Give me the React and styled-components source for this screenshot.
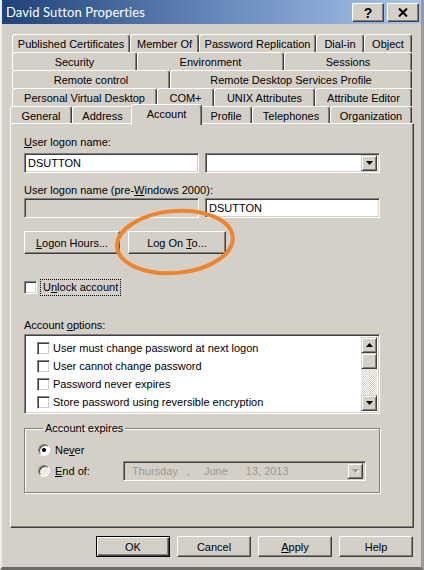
import React from "react";
import styled, { createGlobalStyle, css } from "styled-components";

const GlobalStyle = createGlobalStyle`
  html, body {
    margin: 0;
    padding: 0;
    background: #d4d0c8;
  }
  body {
    font-family: "Liberation Sans", Arial, sans-serif;
    font-size: 11px;
    color: #000;
  }
`;

const Window = styled.div`
  width: 424px;
  height: 570px;
  box-sizing: border-box;
  background: #d4d0c8;
  border-left: 2px solid #eeece8;
  border-right: 3px solid #9c9a96;
  border-bottom: 3px solid #6e6c68;
  display: flex;
  flex-direction: column;
`;

const TitleBar = styled.div`
  height: 24px;
  flex: none;
  display: flex;
  align-items: center;
  justify-content: space-between;
  padding: 0 2px 0 4px;
  background: linear-gradient(90deg, #1f4379 0%, #5d80b4 45%, #a9c7ec 100%);
`;

const Caption = styled.span`
  font-family: Lato, "Open Sans", sans-serif;
  font-size: 13px;
  color: #fff;
  letter-spacing: 0.1px;
`;

const CaptionButtons = styled.div`
  display: flex;
  gap: 3px;
  margin-top: 1px;
`;

const CaptionButton = styled.div`
  width: 32px;
  height: 19px;
  box-sizing: border-box;
  background: #d4d0c8;
  border: 1px solid;
  border-color: #fff #404040 #404040 #fff;
  box-shadow: inset -1px -1px #808080;
  display: flex;
  align-items: center;
  justify-content: center;
  font-family: "Liberation Sans", sans-serif;
  font-weight: bold;
  font-size: 14px;
`;

const TabArea = styled.div`
  padding: 10px 0 0 0;
  display: flex;
  flex-direction: column;
`;

const TabRow = styled.div`
  display: flex;
  height: 18px;
  margin-left: ${(p) => p.$indent}px;
`;

const Tab = styled.div`
  width: ${(p) => p.$w}px;
  height: 18px;
  box-sizing: border-box;
  flex: none;
  border-top: 1px solid #fff;
  border-left: 1px solid #fff;
  border-right: 1px solid #404040;
  box-shadow: inset -1px 0 #808080;
  border-radius: 3px 3px 0 0;
  background: #d4d0c8;
  display: flex;
  align-items: center;
  justify-content: center;
  padding-top: 1px;
  white-space: nowrap;
  ${(p) =>
    p.$active &&
    css`
      position: relative;
      z-index: 1;
      width: ${p.$w + 4}px;
      margin: -2px -2px 0;
      height: 21px;
      padding: 0 0 3px;
    `}
`;

const Panel = styled.div`
  margin: -1px 0 0 8px;
  width: 404px;
  height: 405px;
  box-sizing: border-box;
  border-top: 1px solid #fff;
  border-left: 1px solid #fff;
  border-right: 1px solid #404040;
  border-bottom: 1px solid #404040;
  box-shadow: inset -1px -1px #808080;
  padding: 11px 0 0 13px;
  display: flex;
  flex-direction: column;
`;

const Label = styled.div`
  height: 14px;
  line-height: 14px;
  margin-top: ${(p) => p.$mt || 0}px;
`;

const FieldRow = styled.div`
  display: flex;
  gap: 6px;
  margin-top: ${(p) => p.$mt || 0}px;
`;

const sunken = css`
  box-sizing: border-box;
  border: 1px solid;
  border-color: #808080 #fff #fff #808080;
  box-shadow: inset 1px 1px #404040, inset -1px -1px #d4d0c8;
`;

const Field = styled.div`
  ${sunken};
  width: ${(p) => p.$w || 175}px;
  height: ${(p) => p.$h || 20}px;
  background: ${(p) => (p.$disabled ? "#d4d0c8" : "#fff")};
  display: flex;
  align-items: center;
  justify-content: space-between;
  padding: 0 2px 0 3px;
  font-size: 11px;
  color: ${(p) => (p.$disabled ? "#9a9996" : "#000")};
`;

const ArrowButton = styled.div`
  width: 16px;
  height: 16px;
  box-sizing: border-box;
  flex: none;
  background: #d4d0c8;
  border: 1px solid;
  border-color: #d4d0c8 #404040 #404040 #d4d0c8;
  box-shadow: inset 1px 1px #fff, inset -1px -1px #808080;
  display: flex;
  align-items: center;
  justify-content: center;
`;

const Arrow = ({ up, disabled }) => (
  <svg width="7" height="4" viewBox="0 0 7 4">
    {disabled && <path d="M1 1h7L4.5 4.5z" fill="#fff" />}
    <path
      d={up ? "M0 4h7L3.5 0z" : "M0 0h7L3.5 4z"}
      fill={disabled ? "#9a9996" : "#000"}
    />
  </svg>
);

const ButtonRow = styled.div`
  position: relative;
  display: flex;
  gap: 8px;
  margin-top: 13px;
`;

const Button = styled.button`
  box-sizing: border-box;
  width: ${(p) => p.$w}px;
  height: ${(p) => p.$h}px;
  padding: 0;
  background: #d4d0c8;
  font-family: "Liberation Sans", Arial, sans-serif;
  font-size: 11px;
  color: #000;
  border: 1px solid;
  border-color: #fff #404040 #404040 #fff;
  box-shadow: inset -1px -1px #808080;
  ${(p) =>
    p.$default &&
    css`
      border-color: #000;
      box-shadow: inset 1px 1px #fff, inset -1px -1px #404040,
        inset -2px -2px #808080;
    `}
`;

const Annotation = styled.svg`
  position: absolute;
  left: 86px;
  top: -24px;
  pointer-events: none;
`;

const CheckRow = styled.div`
  display: flex;
  align-items: center;
  height: ${(p) => p.$h || 18}px;
  margin-top: ${(p) => p.$mt || 0}px;
`;

const Box = styled.div`
  ${sunken};
  width: 13px;
  height: 13px;
  flex: none;
  background: #fff;
`;

const CheckText = styled.span`
  margin-left: ${(p) => p.$gap}px;
  padding: 1px 2px;
  line-height: 13px;
  ${(p) =>
    p.$focus &&
    css`
      outline: 1px dotted #000;
      outline-offset: 0;
    `}
`;

const ListBox = styled.div`
  ${sunken};
  margin-top: 2px;
  width: 356px;
  height: 80px;
  background: #fff;
  display: flex;
  justify-content: space-between;
  padding: 2px;
`;

const ListItems = styled.div`
  display: flex;
  flex-direction: column;
  padding: 3px 0 0 10px;
`;

const ScrollBar = styled.div`
  width: 16px;
  display: flex;
  flex-direction: column;
`;

const Track = styled.div`
  flex: 1;
  background-color: #fff;
  background-image: repeating-conic-gradient(#d4d0c8 0 25%, #fff 0 50%);
  background-size: 2px 2px;
`;

const Thumb = styled(ArrowButton)`
  height: 16px;
`;

const GroupBox = styled.fieldset`
  margin: 8px 0 0;
  width: 356px;
  height: 71px;
  box-sizing: border-box;
  padding: 4px 0 0 13px;
  border: 1px solid #808080;
  box-shadow: 1px 1px #fff, inset 1px 1px #fff;
  display: flex;
  flex-direction: column;
`;

const Legend = styled.legend`
  padding: 0 2px;
  margin-left: 5px;
  font-size: 11px;
  line-height: 13px;
`;

const RadioRow = styled.div`
  display: flex;
  align-items: center;
  height: 21px;
`;

const Radio = styled.div`
  width: 12px;
  height: 12px;
  box-sizing: border-box;
  flex: none;
  border-radius: 50%;
  border: 1px solid;
  border-color: #808080 #fff #fff #808080;
  box-shadow: inset 1px 1px #404040;
  background: ${(p) => (p.$disabled ? "#eeece8" : "#fff")};
  display: flex;
  align-items: center;
  justify-content: center;
  &::after {
    content: "";
    width: 4px;
    height: 4px;
    border-radius: 50%;
    background: ${(p) => (p.$checked ? "#000" : "transparent")};
  }
`;

const RadioText = styled.span`
  margin-left: 5px;
  width: 68px;
`;

const DateField = styled(Field)`
  padding-left: 8px;
  justify-content: flex-start;
`;

const DatePart = styled.span`
  margin-left: ${(p) => p.$ml || 0}px;
`;

const Spacer = styled.div`
  flex: 1;
`;

const Footer = styled.div`
  display: flex;
  justify-content: flex-end;
  gap: 7px;
  padding: 8px 8px 0 0;
`;

const tabRows = [
  [
    ["Published Certificates", 118],
    ["Member Of", 69],
    ["Password Replication", 117],
    ["Dial-in", 48],
    ["Object", 48],
  ],
  [
    ["Security", 125],
    ["Environment", 147],
    ["Sessions", 128],
  ],
  [
    ["Remote control", 158],
    ["Remote Desktop Services Profile", 242],
  ],
  [
    ["Personal Virtual Desktop", 145],
    ["COM+", 57],
    ["UNIX Attributes", 101],
    ["Attribute Editor", 97],
  ],
];

const frontRow = [
  ["General", 62],
  ["Address", 61],
  ["Account", 67, true],
  ["Profile", 52],
  ["Telephones", 78],
  ["Organization", 82],
];

const options = [
  "User must change password at next logon",
  "User cannot change password",
  "Password never expires",
  "Store password using reversible encryption",
];

const App = () => {
  return (
    <>
      <GlobalStyle />
      <Window>
        <TitleBar>
          <Caption>David Sutton Properties</Caption>
          <CaptionButtons>
            <CaptionButton>?</CaptionButton>
            <CaptionButton>
              <svg width="10" height="9" viewBox="0 0 10 9">
                <path d="M1 0.5l8 8M9 0.5l-8 8" stroke="#000" strokeWidth="2" />
              </svg>
            </CaptionButton>
          </CaptionButtons>
        </TitleBar>

        <TabArea>
          {tabRows.map((row, i) => (
            <TabRow key={i} $indent={10}>
              {row.map(([name, w]) => (
                <Tab key={name} $w={w}>
                  {name}
                </Tab>
              ))}
            </TabRow>
          ))}
          <TabRow $indent={8}>
            {frontRow.map(([name, w, active]) => (
              <Tab key={name} $w={w} $active={active}>
                {name}
              </Tab>
            ))}
          </TabRow>
        </TabArea>

        <Panel>
          <Label>
            <u>U</u>ser logon name:
          </Label>
          <FieldRow $mt={4}>
            <Field>DSUTTON</Field>
            <Field>
              <span />
              <ArrowButton>
                <Arrow />
              </ArrowButton>
            </Field>
          </FieldRow>

          <Label $mt={10}>
            User logon name (pre-<u>W</u>indows 2000):
          </Label>
          <FieldRow $mt={1}>
            <Field $disabled />
            <Field>DSUTTON</Field>
          </FieldRow>

          <ButtonRow>
            <Button $w={96} $h={23}>
              <u>L</u>ogon Hours...
            </Button>
            <Button $w={98} $h={23}>
              Log On <u>T</u>o...
            </Button>
            <Annotation width="130" height="72" viewBox="0 0 130 72">
              <ellipse
                cx="65"
                cy="35"
                rx="58"
                ry="31"
                fill="none"
                stroke="#f0842c"
                strokeWidth="4"
                transform="rotate(-5 65 35)"
              />
            </Annotation>
          </ButtonRow>

          <CheckRow $mt={25} $h={17}>
            <Box />
            <CheckText $gap={4} $focus>
              U<u>n</u>lock account
            </CheckText>
          </CheckRow>

          <Label $mt={22}>
            Account <u>o</u>ptions:
          </Label>
          <ListBox>
            <ListItems>
              {options.map((o) => (
                <CheckRow key={o}>
                  <Box />
                  <CheckText $gap={1}>{o}</CheckText>
                </CheckRow>
              ))}
            </ListItems>
            <ScrollBar>
              <ArrowButton>
                <Arrow up />
              </ArrowButton>
              <Thumb />
              <Track />
              <ArrowButton>
                <Arrow />
              </ArrowButton>
            </ScrollBar>
          </ListBox>

          <GroupBox>
            <Legend>Account expires</Legend>
            <RadioRow>
              <Radio $checked />
              <RadioText>
                Ne<u>v</u>er
              </RadioText>
            </RadioRow>
            <RadioRow>
              <Radio $disabled />
              <RadioText>
                <u>E</u>nd of:
              </RadioText>
              <DateField $w={243} $disabled>
                <DatePart>Thursday</DatePart>
                <DatePart $ml={9}>,</DatePart>
                <DatePart $ml={14}>June</DatePart>
                <DatePart $ml={18}>13, 2013</DatePart>
                <Spacer />
                <ArrowButton>
                  <Arrow disabled />
                </ArrowButton>
              </DateField>
            </RadioRow>
          </GroupBox>
        </Panel>

        <Footer>
          <Button $w={74} $h={21} $default>
            OK
          </Button>
          <Button $w={74} $h={21}>
            Cancel
          </Button>
          <Button $w={74} $h={21}>
            <u>A</u>pply
          </Button>
          <Button $w={74} $h={21}>
            Help
          </Button>
        </Footer>
      </Window>
    </>
  );
};

export default App;
